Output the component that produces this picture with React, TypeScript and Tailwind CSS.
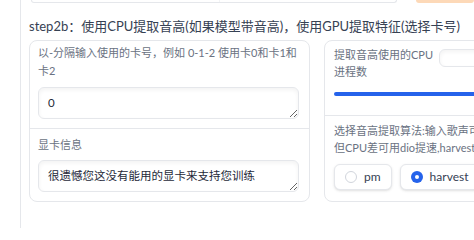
import React from 'react';

const font = { fontFamily: 'Lato, "Noto Sans CJK SC", sans-serif' };

function Radio({ label, checked }: { label: string; checked?: boolean }) {
  return (
    <label className="flex h-[26px] shrink-0 items-center gap-[7px] rounded-[6px] border border-gray-200 bg-white pl-[10px] pr-[10px] shadow-sm">
      {checked ? (
        <span className="flex h-[12px] w-[12px] items-center justify-center rounded-full bg-[#2563eb]">
          <span className="h-[4px] w-[4px] rounded-full bg-white" />
        </span>
      ) : (
        <span className="h-[12px] w-[12px] rounded-full border border-gray-300 bg-white" />
      )}
      <span className="text-[12px] leading-none text-gray-700">{label}</span>
    </label>
  );
}

function Box({ value }: { value: string }) {
  return (
    <textarea
      readOnly
      value={value}
      className="block h-[32px] w-full resize-y rounded-[6px] border border-gray-200 bg-white px-[9px] pt-[6px] text-[11.5px] leading-[18px] text-gray-800 shadow-inner outline-none"
      style={font}
    />
  );
}

export default function App() {
  return (
    <div className="h-[228px] w-[474px] overflow-hidden bg-white" style={font}>
      <div className="ml-[20px] h-full border-l border-gray-200 pl-[8px]">
        <div className="flex items-start">
          <div className="ml-[2px] flex h-[3px] w-[376px] rounded-b-[6px] border-x border-b border-gray-200">
            <div className="w-[188px] border-r border-gray-100" />
          </div>
          <div className="ml-[19px] h-[3px] w-[60px] rounded-b-[6px] bg-[#fdd9b8]" />
        </div>

        <h2 className="mt-[14px] whitespace-nowrap text-[13px] leading-[18px] text-gray-700">
          step2b：使用CPU提取音高(如果模型带音高)，使用GPU提取特征(选择卡号)
        </h2>

        <div className="mt-[5px] flex gap-[14px]">
          <div className="w-[281px] shrink-0 rounded-[8px] border border-gray-200 bg-white">
            <div className="pb-[9px] pl-[8px] pr-[10px] pt-[3px]">
              <p className="text-[11px] leading-[18px] text-gray-500">
                以-分隔输入使用的卡号，例如 0-1-2 使用卡0和卡1和卡2
              </p>
              <div className="mt-[7px]">
                <Box value="0" />
              </div>
            </div>
            <div className="border-t border-gray-200 pb-[9px] pl-[8px] pr-[10px] pt-[7px]">
              <p className="text-[11px] leading-[18px] text-gray-500">显卡信息</p>
              <div className="mt-[6px]">
                <Box value="很遗憾您这没有能用的显卡来支持您训练" />
              </div>
            </div>
          </div>

          <div className="w-[286px] shrink-0 rounded-[8px] border border-gray-200 bg-white">
            <div className="pb-[19px] pl-[9px] pr-[10px] pt-[5px]">
              <div className="flex items-start gap-[8px]">
                <p className="w-[97px] shrink-0 whitespace-nowrap text-[11px] leading-[17px] text-gray-500">
                  提取音高使用的CPU
                  <br />
                  进程数
                </p>
                <div className="mt-[3px] h-[18px] flex-1 rounded-[6px] border border-gray-200 bg-white shadow-inner" />
              </div>
              <div className="mt-[12px] h-[4px] rounded-full bg-[#2563eb]" />
            </div>
            <div className="border-t border-gray-200 pb-[7px] pl-[9px] pr-[10px] pt-[6px]">
              <p className="whitespace-nowrap text-[11px] leading-[17px] text-gray-500">
                选择音高提取算法:输入歌声可用pm提速,高质量语音
                <br />
                但CPU差可用dio提速,harvest质量更好但慢
              </p>
              <div className="mt-[8px] flex gap-[8px]">
                <Radio label="pm" />
                <Radio label="harvest" checked />
                <Radio label="dio" />
              </div>
            </div>
          </div>
        </div>
      </div>
    </div>
  );
}
